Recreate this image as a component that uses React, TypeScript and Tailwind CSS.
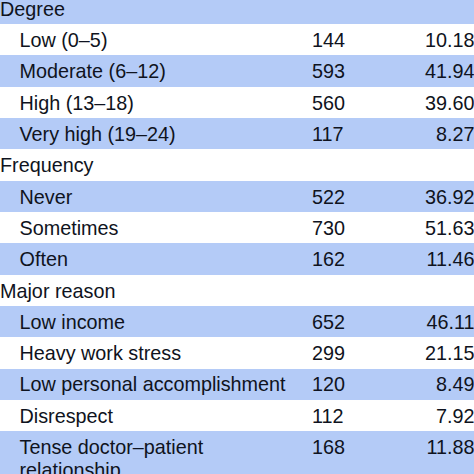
import React from "react";

type Row = { label: string; n?: string; pct?: string; header?: boolean };

const rows: Row[] = [
  { label: "Degree", header: true },
  { label: "Low (0–5)", n: "144", pct: "10.18" },
  { label: "Moderate (6–12)", n: "593", pct: "41.94" },
  { label: "High (13–18)", n: "560", pct: "39.60" },
  { label: "Very high (19–24)", n: "117", pct: "8.27" },
  { label: "Frequency", header: true },
  { label: "Never", n: "522", pct: "36.92" },
  { label: "Sometimes", n: "730", pct: "51.63" },
  { label: "Often", n: "162", pct: "11.46" },
  { label: "Major reason", header: true },
  { label: "Low income", n: "652", pct: "46.11" },
  { label: "Heavy work stress", n: "299", pct: "21.15" },
  { label: "Low personal accomplishment", n: "120", pct: "8.49" },
  { label: "Disrespect", n: "112", pct: "7.92" },
  { label: "Tense doctor–patient relationship", n: "168", pct: "11.88" },
];

export default function App() {
  return (
    <div className="h-[474px] w-[474px] overflow-hidden bg-white">
      <div
        className="mt-[-7.35px] flex flex-col text-[19.8px] leading-[23px] text-[#0f1320]"
        style={{ fontFamily: '"Liberation Sans", Arial, sans-serif' }}
      >
        {rows.map((r, i) => (
          <div
            key={i}
            className={`flex items-start pt-[4.9px] pb-[3.45px] ${
              i % 2 === 0 ? "bg-[#b4cbf7]" : "bg-white"
            }`}
          >
            <div
              className={`w-[312px] shrink-0 pr-[20px] ${
                r.header ? "pl-0" : "pl-[19.5px]"
              }`}
            >
              {r.label}
            </div>
            <div className="flex-1 whitespace-nowrap">{r.n ?? ""}</div>
            <div className="w-[80px] shrink-0 whitespace-nowrap text-right mr-[-0.5px]">
              {r.pct ?? ""}
            </div>
          </div>
        ))}
      </div>
    </div>
  );
}
